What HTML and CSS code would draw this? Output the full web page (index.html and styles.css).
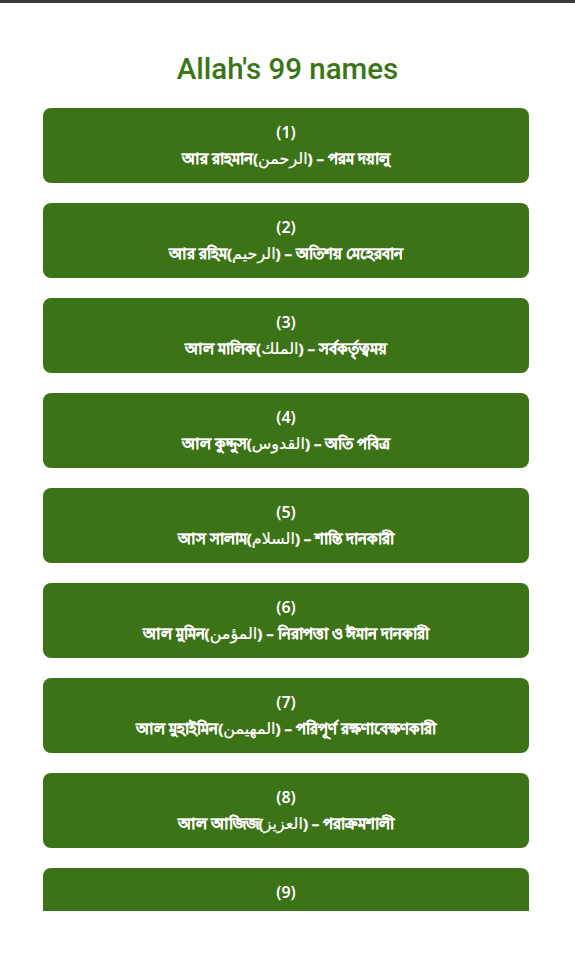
FILE: index.html
```
<!DOCTYPE html>
<html lang="bn">
<head>
    <meta charset="UTF-8">
    <meta name="viewport" content="width=device-width, initial-scale=1.0">
    <title>Allah's 99 names</title>
    <link rel="stylesheet" href="styles.css">
</head>
<body>
    <div class="top-bar"></div>
    <h1>Allah's 99 names</h1>
    <div class="name-list">
        <div class="name-card">
            <div class="num">(1)</div>
            <div class="name">আর রাহমান(<span class="ar">الرحمن</span>) – পরম দয়ালু</div>
        </div>
        <div class="name-card">
            <div class="num">(2)</div>
            <div class="name">আর রহিম(<span class="ar">الرحيم</span>) – অতিশয় মেহেরবান</div>
        </div>
        <div class="name-card">
            <div class="num">(3)</div>
            <div class="name">আল মালিক(<span class="ar">الملك</span>) – সর্বকর্তৃত্বময়</div>
        </div>
        <div class="name-card">
            <div class="num">(4)</div>
            <div class="name">আল কুদ্দুস(<span class="ar">القدوس</span>) – অতি পবিত্র</div>
        </div>
        <div class="name-card">
            <div class="num">(5)</div>
            <div class="name">আস সালাম(<span class="ar">السلام</span>) – শান্তি দানকারী</div>
        </div>
        <div class="name-card">
            <div class="num">(6)</div>
            <div class="name">আল মুমিন(<span class="ar">المؤمن</span>) – নিরাপত্তা ও ঈমান দানকারী</div>
        </div>
        <div class="name-card">
            <div class="num">(7)</div>
            <div class="name">আল মুহাইমিন(<span class="ar">المهيمن</span>) – পরিপূর্ণ রক্ষণাবেক্ষণকারী</div>
        </div>
        <div class="name-card">
            <div class="num">(8)</div>
            <div class="name">আল আজিজ(<span class="ar">العزيز</span>) – পরাক্রমশালী</div>
        </div>
        <div class="name-card">
            <div class="num">(9)</div>
            <div class="name">আল জাব্বার(<span class="ar">الجبار</span>) – প্রবল</div>
        </div>
    </div>
</body>
</html>
```

FILE: styles.css
```
body {
    margin: 0;
    background: #fff;
    font-family: 'Noto Sans', 'DejaVu Sans', sans-serif;
}
.top-bar {
    height: 3px;
    background: #37383a;
}
h1 {
    margin: 50px 0 22px;
    font-family: Roboto, sans-serif;
    font-size: 29.5px;
    font-weight: 500;
    line-height: 33px;
    text-align: center;
    color: #3b7518;
}
.name-list {
    display: flex;
    flex-direction: column;
    gap: 20px;
    height: 803px;
    overflow: hidden;
    padding: 0 46px 0 43px;
}
.name-card {
    flex-shrink: 0;
    background-color: #3d7317;
    color: #fff;
    border-radius: 8px;
    padding: 11px 10px 12px;
    text-align: center;
    font-size: 15px;
    line-height: 26px;
}
.num {
    font-size: 16px;
    font-weight: 600;
}
.name {
    font-weight: bold;
    -webkit-text-stroke: 0.35px #fff;
}
/* arabic names read lighter than the bengali */
.ar {
    font-size: 16px;
    font-weight: normal;
    -webkit-text-stroke: 0.2px #fff;
}
```
